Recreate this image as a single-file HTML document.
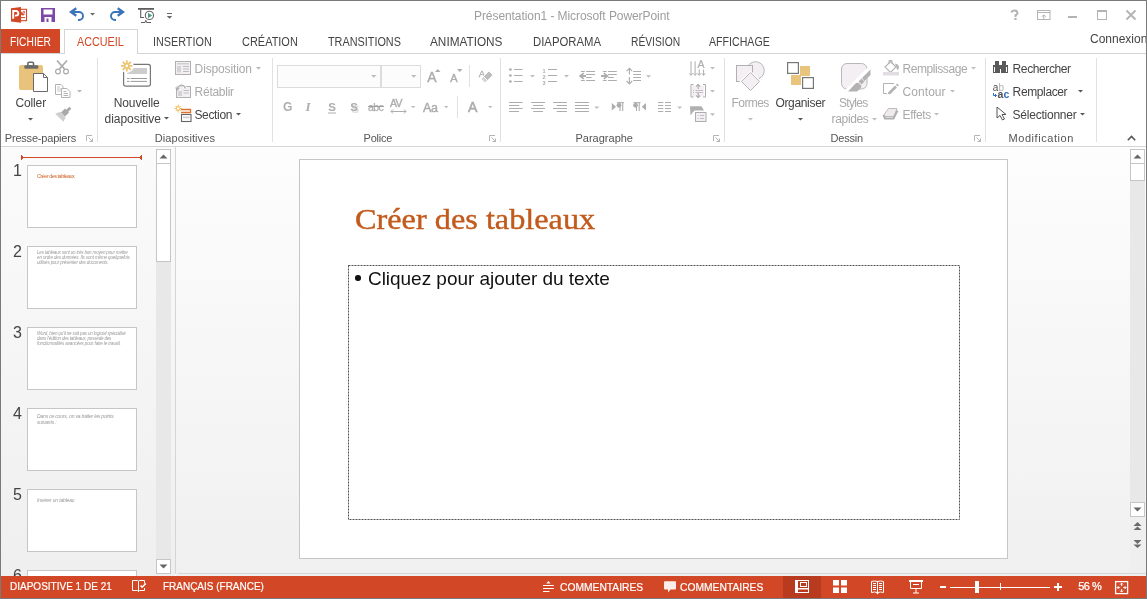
<!DOCTYPE html><html><head><meta charset="utf-8"><style>
html,body{margin:0;padding:0;}
body{width:1147px;height:599px;position:relative;overflow:hidden;background:#fff;will-change:transform;font-family:"Liberation Sans",sans-serif;}
.t{position:absolute;white-space:nowrap;}
.r{position:absolute;}
.s{position:absolute;overflow:visible;}
</style></head><body>
<div class="r" style="left:0px;top:0px;width:1147px;height:599px;background:#ffffff;"></div>
<svg class="s" style="left:0;top:0" width="1147" height="599" viewBox="0 0 1147 599"><rect x="20.5" y="9.3" width="6" height="11.4" fill="#fff" stroke="#d24726" stroke-width="1.1"/>
<path d="M11 8.2L21 7V22.8L11 21.5Z" fill="#d24726"/>
<path d="M13.2 18.8V11H16A2.3 2.3 0 0 1 16 15.6H14.9" fill="none" stroke="#fff" stroke-width="1.9"/>
<path d="M22.5 11.5A2 2 0 1 0 24.8 13.5H22.5Z" fill="#d24726"/>
<path d="M23.3 10.8V12.7H25.2A2 2 0 0 0 23.3 10.8Z" fill="#d24726"/>
<path d="M21 17.6H25" stroke="#d24726" stroke-width="1"/></svg>
<svg class="s" style="left:41px;top:8px;" width="14" height="14" viewBox="0 0 14 14"><path d="M0.5 0.5H13.5V13.5H0.5Z" fill="none" stroke="#7e48a8" stroke-width="1"/>
<rect x="0" y="0" width="14" height="14" fill="#7e48a8"/>
<rect x="2.5" y="1.5" width="9" height="5" fill="#fff"/>
<rect x="3.5" y="9" width="7" height="5" fill="#fff"/>
<rect x="5.5" y="10.5" width="2" height="3.5" fill="#7e48a8"/></svg>
<svg class="s" style="left:0;top:0" width="1147" height="599" viewBox="0 0 1147 599"><path d="M76.3 8.3L71 12L76.3 15.7" fill="none" stroke="#3a73b8" stroke-width="2.3"/>
<path d="M71.5 12H79A4 4 0 0 1 79 20H78" fill="none" stroke="#3a73b8" stroke-width="1.9"/>
<path d="M117.7 8.3L123 12L117.7 15.7" fill="none" stroke="#3a73b8" stroke-width="2.3"/>
<path d="M122.5 12H115A4 4 0 0 0 115 20H116" fill="none" stroke="#3a73b8" stroke-width="1.9"/></svg>
<svg class="s" style="left:90.0px;top:13px;" width="5.0" height="2.5" viewBox="0 0 5.0 2.5"><path d="M0 0H5.0L2.5 2.5Z" fill="#666"/></svg>
<svg class="s" style="left:0;top:0" width="1147" height="599" viewBox="0 0 1147 599"><rect x="138" y="8" width="16" height="1.8" fill="#5f5f5f"/>
<path d="M140.7 9.5V17.5H144" fill="none" stroke="#5f5f5f" stroke-width="1.1"/>
<circle cx="149.4" cy="15.4" r="4.1" fill="#fff" stroke="#666" stroke-width="1.1"/>
<path d="M148 12.8L152.2 15.5L148 18.2Z" fill="#4e9c80"/>
<path d="M141 22.5H145L145.8 20.3L146.6 22.5H151" fill="none" stroke="#5f5f5f" stroke-width="1"/>
<path d="M167 13.5H172" stroke="#666" stroke-width="1"/><path d="M166.8 16H172.2L169.5 18.8Z" fill="#666"/></svg>
<div class="t" style="left:474px;top:10px;font-size:12px;line-height:12px;color:#9d9d9d;font-family:'Liberation Sans', sans-serif;letter-spacing:-0.071px;font-weight:normal;">Présentation1 - Microsoft PowerPoint</div>
<svg class="s" style="left:0;top:0" width="1147" height="599" viewBox="0 0 1147 599"><path d="M1011.5 12.5Q1012 10.5 1014.5 10.5Q1017.5 10.5 1017.5 13Q1017.5 14.5 1015.5 15.3V17" fill="none" stroke="#b3b3b3" stroke-width="2"/>
<rect x="1014.3" y="18" width="2.3" height="2" fill="#b3b3b3"/>
<rect x="1037.5" y="10.5" width="12.5" height="9" fill="none" stroke="#b3b3b3"/><path d="M1037.5 12.5H1050" stroke="#b3b3b3"/>
<path d="M1043.75 19V15M1041.8 16.8L1043.75 14.8L1045.7 16.8" fill="none" stroke="#b3b3b3"/>
<rect x="1068" y="16" width="9" height="2" fill="#b3b3b3"/>
<rect x="1097.5" y="10.5" width="9" height="9" fill="none" stroke="#b3b3b3"/><rect x="1097" y="10" width="10" height="2" fill="#b3b3b3"/>
<path d="M1126.5 10.5L1135.5 19.5M1135.5 10.5L1126.5 19.5" stroke="#b3b3b3" stroke-width="1.8"/></svg>
<div class="r" style="left:1px;top:29px;width:59px;height:25px;background:#d24726;"></div>
<div class="t" style="left:10px;top:36px;font-size:12px;line-height:12px;color:#ffffff;font-family:'Liberation Sans', sans-serif;letter-spacing:0.000px;font-weight:normal;transform:scaleX(0.8542);transform-origin:0px 0;">FICHIER</div>
<div class="r" style="left:64px;top:29px;width:74px;height:25px;border:1px solid #d5d5d5;box-sizing:border-box;border-bottom:none;background:#fff;"></div>
<div class="t" style="left:77px;top:36px;font-size:12px;line-height:12px;color:#d24726;font-family:'Liberation Sans', sans-serif;letter-spacing:0.000px;font-weight:normal;transform:scaleX(0.8981);transform-origin:0px 0;">ACCUEIL</div>
<div class="r" style="left:1px;top:53px;width:63px;height:1px;background:#d5d5d5;"></div>
<div class="r" style="left:137px;top:53px;width:1009px;height:1px;background:#d5d5d5;"></div>
<div class="t" style="left:153px;top:36px;font-size:12px;line-height:12px;color:#444444;font-family:'Liberation Sans', sans-serif;letter-spacing:0.000px;font-weight:normal;transform:scaleX(0.9015);transform-origin:0px 0;">INSERTION</div>
<div class="t" style="left:241.7px;top:36px;font-size:12px;line-height:12px;color:#444444;font-family:'Liberation Sans', sans-serif;letter-spacing:0.000px;font-weight:normal;transform:scaleX(0.9131);transform-origin:0px 0;">CRÉATION</div>
<div class="t" style="left:327.5px;top:36px;font-size:12px;line-height:12px;color:#444444;font-family:'Liberation Sans', sans-serif;letter-spacing:0.000px;font-weight:normal;transform:scaleX(0.9037);transform-origin:0px 0;">TRANSITIONS</div>
<div class="t" style="left:430px;top:36px;font-size:12px;line-height:12px;color:#444444;font-family:'Liberation Sans', sans-serif;letter-spacing:0.000px;font-weight:normal;transform:scaleX(0.9824);transform-origin:0px 0;">ANIMATIONS</div>
<div class="t" style="left:532.5px;top:36px;font-size:12px;line-height:12px;color:#444444;font-family:'Liberation Sans', sans-serif;letter-spacing:0.000px;font-weight:normal;transform:scaleX(0.9444);transform-origin:0px 0;">DIAPORAMA</div>
<div class="t" style="left:630.5px;top:36px;font-size:12px;line-height:12px;color:#444444;font-family:'Liberation Sans', sans-serif;letter-spacing:0.000px;font-weight:normal;transform:scaleX(0.8561);transform-origin:0px 0;">RÉVISION</div>
<div class="t" style="left:709.3px;top:36px;font-size:12px;line-height:12px;color:#444444;font-family:'Liberation Sans', sans-serif;letter-spacing:0.000px;font-weight:normal;transform:scaleX(0.8841);transform-origin:0px 0;">AFFICHAGE</div>
<div class="t" style="left:1090px;top:33px;font-size:12px;line-height:12px;color:#444444;font-family:'Liberation Sans', sans-serif;letter-spacing:0.000px;font-weight:normal;">Connexion</div>
<div class="r" style="left:1px;top:146px;width:1145px;height:1px;background:#d5d5d5;"></div>
<div class="r" style="left:97px;top:58px;width:1px;height:84px;background:#e1e1e1;"></div>
<div class="r" style="left:272px;top:58px;width:1px;height:84px;background:#e1e1e1;"></div>
<div class="r" style="left:500px;top:58px;width:1px;height:84px;background:#e1e1e1;"></div>
<div class="r" style="left:724px;top:58px;width:1px;height:84px;background:#e1e1e1;"></div>
<div class="r" style="left:985px;top:58px;width:1px;height:84px;background:#e1e1e1;"></div>
<div class="r" style="left:1096px;top:58px;width:1px;height:84px;background:#e1e1e1;"></div>
<div class="t" style="left:4.8px;top:133px;font-size:11px;line-height:11px;color:#555;font-family:'Liberation Sans', sans-serif;letter-spacing:-0.200px;font-weight:normal;">Presse-papiers</div>
<div class="t" style="left:154.7px;top:133px;font-size:11px;line-height:11px;color:#555;font-family:'Liberation Sans', sans-serif;letter-spacing:0.082px;font-weight:normal;">Diapositives</div>
<div class="t" style="left:363.6px;top:133px;font-size:11px;line-height:11px;color:#555;font-family:'Liberation Sans', sans-serif;letter-spacing:-0.220px;font-weight:normal;">Police</div>
<div class="t" style="left:575.5px;top:133px;font-size:11px;line-height:11px;color:#555;font-family:'Liberation Sans', sans-serif;letter-spacing:0.000px;font-weight:normal;">Paragraphe</div>
<div class="t" style="left:830.6px;top:133px;font-size:11px;line-height:11px;color:#555;font-family:'Liberation Sans', sans-serif;letter-spacing:-0.200px;font-weight:normal;">Dessin</div>
<div class="t" style="left:1008.5px;top:133px;font-size:11px;line-height:11px;color:#555;font-family:'Liberation Sans', sans-serif;letter-spacing:0.555px;font-weight:normal;">Modification</div>
<svg class="s" style="left:86px;top:135px;" width="7" height="7" viewBox="0 0 7 7"><path d="M0.5 6V0.5H6" fill="none" stroke="#b5b5b5"/><path d="M2.5 2.5L6.5 6.5M6.5 3.5V6.5H3.5" fill="none" stroke="#b5b5b5"/></svg>
<svg class="s" style="left:489px;top:135px;" width="7" height="7" viewBox="0 0 7 7"><path d="M0.5 6V0.5H6" fill="none" stroke="#b5b5b5"/><path d="M2.5 2.5L6.5 6.5M6.5 3.5V6.5H3.5" fill="none" stroke="#b5b5b5"/></svg>
<svg class="s" style="left:713px;top:135px;" width="7" height="7" viewBox="0 0 7 7"><path d="M0.5 6V0.5H6" fill="none" stroke="#b5b5b5"/><path d="M2.5 2.5L6.5 6.5M6.5 3.5V6.5H3.5" fill="none" stroke="#b5b5b5"/></svg>
<svg class="s" style="left:974px;top:135px;" width="7" height="7" viewBox="0 0 7 7"><path d="M0.5 6V0.5H6" fill="none" stroke="#b5b5b5"/><path d="M2.5 2.5L6.5 6.5M6.5 3.5V6.5H3.5" fill="none" stroke="#b5b5b5"/></svg>
<svg class="s" style="left:1127px;top:135px;" width="9" height="6" viewBox="0 0 9 6"><path d="M0.8 5.2L4.5 1.5L8.2 5.2" fill="none" stroke="#555" stroke-width="1.6"/></svg>
<svg class="s" style="left:18px;top:61px;" width="30" height="31" viewBox="0 0 30 31"><rect x="1" y="4" width="24" height="25" rx="2" fill="#e9c27b"/>
<rect x="6.3" y="4.3" width="14" height="3.5" rx="1.2" fill="#6a6a6a"/>
<rect x="9.8" y="1.2" width="5.8" height="3.8" rx="1.5" fill="none" stroke="#6a6a6a" stroke-width="1.6"/>
<path d="M15.5 12.5H25.5L29.5 16.5V30.5H15.5Z" fill="#fff" stroke="#6a6a6a" stroke-width="1"/>
<path d="M25.5 12.5V16.5H29.5" fill="none" stroke="#6a6a6a" stroke-width="1"/></svg>
<div class="t" style="left:15.5px;top:97px;font-size:12px;line-height:12px;color:#444444;font-family:'Liberation Sans', sans-serif;letter-spacing:-0.140px;font-weight:normal;">Coller</div>
<svg class="s" style="left:28.0px;top:117.5px;" width="5.0" height="2.5" viewBox="0 0 5.0 2.5"><path d="M0 0H5.0L2.5 2.5Z" fill="#555"/></svg>
<svg class="s" style="left:0;top:0" width="1147" height="599" viewBox="0 0 1147 599"><path d="M57 60.5L64.5 69M67 60.5L59.5 69" stroke="#ababab" stroke-width="1.7"/>
<circle cx="58" cy="71.5" r="2.4" fill="#fff" stroke="#ababab" stroke-width="1.2"/>
<circle cx="66" cy="71.5" r="2.4" fill="#fff" stroke="#ababab" stroke-width="1.2"/></svg>
<svg class="s" style="left:55px;top:84px;" width="16" height="14" viewBox="0 0 16 14"><path d="M0.5 0.5H6L8 2.5V10.5H0.5Z" fill="#fff" stroke="#b3b3b3"/>
<path d="M2 3H5M2 5H6M2 7H6" stroke="#c8c8c8"/>
<path d="M6.5 4.5H12L15 7.5V13.5H6.5Z" fill="#fff" stroke="#b3b3b3"/>
<path d="M8.5 7.5H11.5M8.5 9.5H13M8.5 11.5H13" stroke="#b3b3b3"/></svg>
<svg class="s" style="left:77.0px;top:90px;" width="5.0" height="2.5" viewBox="0 0 5.0 2.5"><path d="M0 0H5.0L2.5 2.5Z" fill="#b5b5b5"/></svg>
<svg class="s" style="left:0;top:0" width="1147" height="599" viewBox="0 0 1147 599"><path d="M66.3 111.7L70.3 107.7" stroke="#a9a9a9" stroke-width="2.8"/>
<path d="M61 112.5L65 108.5L69 112.5L65 116.5Z" fill="#a9a9a9"/>
<path d="M60.2 111.8L65.7 117.3L63.5 121.8L55.2 113.8Z" fill="#cfcfcf"/></svg>
<svg class="s" style="left:0;top:0" width="1147" height="599" viewBox="0 0 1147 599"><rect x="123.6" y="64.4" width="26.8" height="21.8" rx="2.2" fill="#fff" stroke="#777" stroke-width="1.2"/>
<rect x="127" y="68" width="20" height="6" fill="#cdcdcd"/>
<path d="M127 78.5H129.5M130.5 78.5H147M127 81.4H129.5M130.5 81.4H147" stroke="#9a9a9a" stroke-width="1"/>
<circle cx="126.8" cy="65.9" r="7" fill="#fff"/>
<path d="M126.8 60.3V71.5M121.2 65.9H132.4M122.8 61.9L130.8 69.9M130.8 61.9L122.8 69.9" stroke="#ecc26a" stroke-width="1.7"/>
<circle cx="126.8" cy="65.9" r="2.6" fill="#ecc26a"/><circle cx="126.8" cy="65.9" r="1.4" fill="#fff"/></svg>
<div class="t" style="left:113.7px;top:97px;font-size:12px;line-height:12px;color:#444444;font-family:'Liberation Sans', sans-serif;letter-spacing:-0.100px;font-weight:normal;">Nouvelle</div>
<div class="t" style="left:104.6px;top:113px;font-size:12px;line-height:12px;color:#444444;font-family:'Liberation Sans', sans-serif;letter-spacing:-0.040px;font-weight:normal;">diapositive</div>
<svg class="s" style="left:164.0px;top:117.3px;" width="5.0" height="2.5" viewBox="0 0 5.0 2.5"><path d="M0 0H5.0L2.5 2.5Z" fill="#555"/></svg>
<svg class="s" style="left:0;top:0" width="1147" height="599" viewBox="0 0 1147 599"><rect x="175.5" y="61.5" width="15" height="13" fill="#f3eff3" stroke="#b0b0b0"/>
<rect x="177" y="63" width="12" height="1.5" fill="#cfcfcf"/>
<rect x="177" y="66" width="4" height="6.5" fill="#d3d3d3"/>
<path d="M183 66.5H189M183 69H189M183 71.5H189" stroke="#bdbdbd"/></svg>
<div class="t" style="left:194.6px;top:63px;font-size:12px;line-height:12px;color:#a9a9a9;font-family:'Liberation Sans', sans-serif;letter-spacing:-0.130px;font-weight:normal;">Disposition</div>
<svg class="s" style="left:256.0px;top:66.5px;" width="5.0" height="2.5" viewBox="0 0 5.0 2.5"><path d="M0 0H5.0L2.5 2.5Z" fill="#b5b5b5"/></svg>
<svg class="s" style="left:0;top:0" width="1147" height="599" viewBox="0 0 1147 599"><rect x="176.5" y="86.5" width="14" height="11" fill="#f3eff3" stroke="#b0b0b0"/>
<rect x="178" y="91" width="4" height="5" fill="#d3d3d3"/>
<path d="M183.5 90.5H189M183.5 93H189" stroke="#bdbdbd"/>
<path d="M185.5 88.5Q184 84 180 85Q177.5 86 177.5 89" fill="none" stroke="#fff" stroke-width="3"/>
<path d="M185.5 88.5Q184 84.5 180.5 85.3Q178 86 177.3 88.5" fill="none" stroke="#b0b0b0" stroke-width="1.3"/>
<path d="M175 87.5L177.3 91L179.8 87.8Z" fill="#b0b0b0"/></svg>
<div class="t" style="left:194.6px;top:86px;font-size:12px;line-height:12px;color:#a9a9a9;font-family:'Liberation Sans', sans-serif;letter-spacing:-0.271px;font-weight:normal;">Rétablir</div>
<svg class="s" style="left:0;top:0" width="1147" height="599" viewBox="0 0 1147 599"><path d="M181 109.5H190.5V112.5H181" fill="none" stroke="#e0702b" stroke-width="1.3"/>
<rect x="181.5" y="114.5" width="9.5" height="7" fill="#fff" stroke="#666" stroke-width="1.1"/>
<rect x="183" y="116.5" width="6.5" height="1.8" fill="#cfcfcf"/>
<path d="M178.2 104.5V112.5M174.5 108.5H182M175.6 105.9L180.8 111.1M180.8 105.9L175.6 111.1" stroke="#f0b54a" stroke-width="0.9"/>
<circle cx="178.2" cy="108.5" r="1.8" fill="#fff" stroke="#f0b54a" stroke-width="0.9"/></svg>
<div class="t" style="left:194.4px;top:109px;font-size:12px;line-height:12px;color:#444444;font-family:'Liberation Sans', sans-serif;letter-spacing:-0.333px;font-weight:normal;">Section</div>
<svg class="s" style="left:236.3px;top:113px;" width="5.0" height="2.5" viewBox="0 0 5.0 2.5"><path d="M0 0H5.0L2.5 2.5Z" fill="#555"/></svg>
<div class="r" style="left:277px;top:65px;width:104px;height:23px;border:1px solid #dcdcdc;box-sizing:border-box;background:#fcfcfc;"></div>
<div class="r" style="left:381px;top:65px;width:40px;height:23px;border:1px solid #dcdcdc;box-sizing:border-box;background:#fcfcfc;"></div>
<svg class="s" style="left:370.7px;top:74.8px;" width="5.6" height="2.8" viewBox="0 0 5.6 2.8"><path d="M0 0H5.6L2.8 2.8Z" fill="#bdbdbd"/></svg>
<svg class="s" style="left:410.7px;top:74.8px;" width="5.6" height="2.8" viewBox="0 0 5.6 2.8"><path d="M0 0H5.6L2.8 2.8Z" fill="#bdbdbd"/></svg>
<svg class="s" style="left:0;top:0" width="1147" height="599" viewBox="0 0 1147 599"><text x="427.3" y="81.6" font-family="Liberation Sans" font-size="14" fill="#adadad" stroke="#adadad" stroke-width="0.45">A</text>
<path d="M435 72H440.5L437.75 69Z" fill="#adadad"/>
<text x="450.2" y="81.6" font-family="Liberation Sans" font-size="11" fill="#adadad" stroke="#adadad" stroke-width="0.4">A</text>
<path d="M457 69H462.5L459.75 72Z" fill="#adadad"/></svg>
<div class="r" style="left:469px;top:65px;width:1px;height:22px;background:#e1e1e1;"></div>
<svg class="s" style="left:0;top:0" width="1147" height="599" viewBox="0 0 1147 599"><text x="478.8" y="77" font-family="Liberation Sans" font-size="9.5" fill="#b0b0b0" stroke="#b0b0b0" stroke-width="0.3">A</text>
<path d="M483.5 76.5L489 71L493 75L487.5 80.5Z" fill="#bdbdbd" stroke="#fff" stroke-width="0.8"/>
<path d="M481 79L483.5 76.5L487.5 80.5L485 83Z" fill="#d5d5d5" stroke="#fff" stroke-width="0.8"/></svg>
<svg class="s" style="left:0;top:0" width="1147" height="599" viewBox="0 0 1147 599"><text x="283" y="111" font-family="Liberation Sans" font-weight="bold" font-size="12" fill="#adadad">G</text>
<text x="305.5" y="111" font-family="Liberation Serif" font-weight="bold" font-style="italic" font-size="13" fill="#adadad">I</text>
<text x="328.3" y="111" font-family="Liberation Sans" font-weight="bold" font-size="11.5" fill="#adadad">S</text><rect x="328" y="112.5" width="8" height="1" fill="#adadad"/>
<text x="351.5" y="112.5" font-family="Liberation Sans" font-weight="bold" font-size="11.5" fill="#e2e2e2">S</text>
<text x="350.3" y="111" font-family="Liberation Sans" font-weight="bold" font-size="11.5" fill="#adadad">S</text>
<text x="368" y="110.5" font-family="Liberation Sans" font-size="10.5" fill="#adadad" stroke="#adadad" stroke-width="0.25" letter-spacing="-0.6">abc</text><rect x="368" y="106" width="16" height="1" fill="#a0a0a0"/>
<text x="390" y="107.3" font-family="Liberation Sans" font-size="10.5" fill="#adadad" stroke="#adadad" stroke-width="0.35" letter-spacing="-0.6">AV</text>
<path d="M391 111.5H406M393 109.5L391 111.5L393 113.5M404 109.5L406 111.5L404 113.5" fill="none" stroke="#adadad"/></svg>
<svg class="s" style="left:410.8px;top:105.5px;" width="4.4" height="2.2" viewBox="0 0 4.4 2.2"><path d="M0 0H4.4L2.2 2.2Z" fill="#bdbdbd"/></svg>
<svg class="s" style="left:423px;top:101px;" width="16" height="12" viewBox="0 0 16 12"><text x="0" y="10.5" font-family="Liberation Sans" font-size="12.5" fill="#adadad" stroke="#adadad" stroke-width="0.45" letter-spacing="-0.3">Aa</text></svg>
<svg class="s" style="left:443.8px;top:105.5px;" width="4.4" height="2.2" viewBox="0 0 4.4 2.2"><path d="M0 0H4.4L2.2 2.2Z" fill="#bdbdbd"/></svg>
<div class="r" style="left:457px;top:96px;width:1px;height:22px;background:#e1e1e1;"></div>
<svg class="s" style="left:468px;top:101px;" width="11" height="12" viewBox="0 0 11 12"><text x="0" y="11" font-family="Liberation Sans" font-size="14" fill="#adadad" stroke="#adadad" stroke-width="0.6">A</text></svg>
<svg class="s" style="left:487.5px;top:105.5px;" width="4.4" height="2.2" viewBox="0 0 4.4 2.2"><path d="M0 0H4.4L2.2 2.2Z" fill="#bdbdbd"/></svg>
<svg class="s" style="left:0;top:0" width="1147" height="599" viewBox="0 0 1147 599"><circle cx="510.4" cy="69.5" r="1.35" fill="#adadad"/><path d="M514 69.5H522.5" stroke="#adadad"/><circle cx="510.4" cy="75.5" r="1.35" fill="#adadad"/><path d="M514 75.5H522.5" stroke="#adadad"/><circle cx="510.4" cy="81.5" r="1.35" fill="#adadad"/><path d="M514 81.5H522.5" stroke="#adadad"/><path d="M530 75H535L532.5 77.6Z" fill="#bdbdbd"/><path d="M548 69.5H557" stroke="#adadad"/><path d="M548 75.5H557" stroke="#adadad"/><path d="M548 81.5H557" stroke="#adadad"/><text x="542.6" y="72.6" font-family="Liberation Sans" font-weight="bold" font-size="5.5" fill="#adadad">1</text><text x="542.6" y="78.6" font-family="Liberation Sans" font-weight="bold" font-size="5.5" fill="#adadad">2</text><text x="542.6" y="84.6" font-family="Liberation Sans" font-weight="bold" font-size="5.5" fill="#adadad">3</text><path d="M564 75H569L566.5 77.6Z" fill="#bdbdbd"/><path d="M581 71.5H584.8M586.2 71.5H595M586.2 74.5H595M586.2 77.5H591.7M581 80.5H584.8M586.2 80.5H595" stroke="#adadad"/><path d="M583.8 73.2L580 76L583.8 78.8" fill="none" stroke="#adadad" stroke-width="1.6"/><path d="M580 76H586" stroke="#adadad" stroke-width="2"/><path d="M602.9 71.5H606.7M608.1 71.5H616.8M608.1 74.5H616.8M608.1 77.5H613.7M602.9 80.5H606.7M608.1 80.5H616.8" stroke="#adadad"/><path d="M603.8 73.2L607.6 76L603.8 78.8" fill="none" stroke="#adadad" stroke-width="1.6"/><path d="M601 76H607" stroke="#adadad" stroke-width="2"/><path d="M629.4 68.5V74.6M629.4 77V83.6" stroke="#adadad" stroke-width="1.1"/><path d="M626.6 71.2L629.4 68.3L632.2 71.2M626.6 81L629.4 83.9L632.2 81" fill="none" stroke="#adadad" stroke-width="1.1"/><path d="M633.2 71.5H641M633.2 74.5H641M633.2 77.5H641M633.2 80.5H641" stroke="#adadad"/><path d="M646 75.2H651L648.5 77.8Z" fill="#bdbdbd"/><path d="M691 61.3V75M695.1 61.3V75M699.2 69.5V75M703.6 69.5V75" stroke="#adadad"/><path d="M689.3 73.3L691 75.5L692.7 73.3" fill="none" stroke="#adadad" stroke-width="0.9"/><path d="M693.4 73.3L695.1 75.5L696.8000000000001 73.3" fill="none" stroke="#adadad" stroke-width="0.9"/><path d="M697.5 73.3L699.2 75.5L700.9000000000001 73.3" fill="none" stroke="#adadad" stroke-width="0.9"/><path d="M701.9 73.3L703.6 75.5L705.3000000000001 73.3" fill="none" stroke="#adadad" stroke-width="0.9"/><text x="697.6" y="67.8" font-family="Liberation Sans" font-size="10.5" fill="#adadad" stroke="#adadad" stroke-width="0.2">A</text><path d="M710 67H715L712.5 69.6Z" fill="#bdbdbd"/><rect x="692" y="85.5" width="12" height="11" fill="#f3eff3"/><path d="M693.5 84.5H691V97H693.5M703 84.5H705.5V97H703" fill="none" stroke="#adadad"/><path d="M693 90.5H694M695.5 90.5H703M693 92.5H694M695.5 92.5H703" stroke="#c5bfc5"/><path d="M698.2 84.5V89M698.2 93V97.5" stroke="#adadad" stroke-width="1.1"/><path d="M696.2 86.5L698.2 84.5L700.2 86.5M696.2 95.5L698.2 97.5L700.2 95.5" fill="none" stroke="#adadad" stroke-width="1.1"/><path d="M710 90H715L712.5 92.6Z" fill="#bdbdbd"/><path d="M690 106.3H701.5L704 110.4H694.5L693 112L690.5 115.6Z" fill="#b0b0b0"/><rect x="695.5" y="112.5" width="10.5" height="9" fill="#f3eff3" stroke="#adadad"/><path d="M697.5 115.5H698.5M700 115.5H704M697.5 118.5H698.5M700 118.5H704" stroke="#c0bac0"/><path d="M710 113.3H715L712.5 115.89999999999999Z" fill="#bdbdbd"/><path d="M509 102.5H522.6" stroke="#adadad"/><path d="M531.2 102.5H545" stroke="#adadad"/><path d="M553 102.5H567" stroke="#adadad"/><path d="M575 102.5H589" stroke="#adadad"/><path d="M658 102.5H663.2" stroke="#adadad"/><path d="M665 102.5H671" stroke="#adadad"/><path d="M509 105.5H519" stroke="#adadad"/><path d="M533.2 105.5H543" stroke="#adadad"/><path d="M556.7 105.5H567" stroke="#adadad"/><path d="M575 105.5H589" stroke="#adadad"/><path d="M658 105.5H663.2" stroke="#adadad"/><path d="M665 105.5H671" stroke="#adadad"/><path d="M509 108.5H522.6" stroke="#adadad"/><path d="M531.2 108.5H545" stroke="#adadad"/><path d="M553 108.5H567" stroke="#adadad"/><path d="M575 108.5H589" stroke="#adadad"/><path d="M658 108.5H663.2" stroke="#adadad"/><path d="M665 108.5H671" stroke="#adadad"/><path d="M509 111.5H519" stroke="#adadad"/><path d="M533.2 111.5H543" stroke="#adadad"/><path d="M556.7 111.5H567" stroke="#adadad"/><path d="M575 111.5H589" stroke="#adadad"/><path d="M658 111.5H663.2" stroke="#adadad"/><path d="M665 111.5H671" stroke="#adadad"/><path d="M594.3 106.5H599.3L596.8 109.1Z" fill="#bdbdbd"/><path d="M677.2 106.5H682.2L679.7 109.1Z" fill="#bdbdbd"/><path d="M611.8 103L616 106.7L611.8 110.4Z" fill="#adadad"/><path d="M620 103V111M622.7 103V111" stroke="#adadad" stroke-width="1.1"/><path d="M617 102.6H624" stroke="#adadad"/><circle cx="619" cy="105.3" r="2.4" fill="#adadad"/><path d="M646 103L641.8 106.7L646 110.4Z" fill="#adadad"/><path d="M636.5 103V111M639.2 103V111" stroke="#adadad" stroke-width="1.1"/><path d="M633.6 102.6H640.5" stroke="#adadad"/><circle cx="635.5" cy="105.3" r="2.4" fill="#adadad"/></svg>
<svg class="s" style="left:0;top:0" width="1147" height="599" viewBox="0 0 1147 599"><circle cx="755.5" cy="70.5" r="8.8" fill="#f3eff3" stroke="#b8b8b8"/>
<rect x="736.5" y="65.5" width="16" height="16" fill="#f3eff3" stroke="#b0b0b0"/>
<path d="M750.5 70.5L761.5 81.5L750.5 92.5L739.5 81.5Z" fill="#fff"/>
<path d="M750.5 72.5L759.5 81.5L750.5 90.5L741.5 81.5Z" fill="#f3eff3" stroke="#b8b8b8"/></svg>
<div class="t" style="left:731.6px;top:97px;font-size:12px;line-height:12px;color:#a9a9a9;font-family:'Liberation Sans', sans-serif;letter-spacing:-0.580px;font-weight:normal;">Formes</div>
<svg class="s" style="left:747.5px;top:117.5px;" width="5.0" height="2.5" viewBox="0 0 5.0 2.5"><path d="M0 0H5.0L2.5 2.5Z" fill="#bdbdbd"/></svg>
<svg class="s" style="left:0;top:0" width="1147" height="599" viewBox="0 0 1147 599"><rect x="800" y="66" width="10" height="10" fill="#e9c47d"/><rect x="791" y="75" width="10" height="10" fill="#e9c47d"/>
<rect x="787.6" y="62.6" width="10.8" height="10.8" fill="#fff" stroke="#777" stroke-width="1.2"/>
<rect x="802.6" y="77.6" width="10.8" height="10.8" fill="#fff" stroke="#777" stroke-width="1.2"/></svg>
<div class="t" style="left:775.4px;top:97px;font-size:12px;line-height:12px;color:#444444;font-family:'Liberation Sans', sans-serif;letter-spacing:-0.325px;font-weight:normal;">Organiser</div>
<svg class="s" style="left:798.0px;top:117.5px;" width="5.0" height="2.5" viewBox="0 0 5.0 2.5"><path d="M0 0H5.0L2.5 2.5Z" fill="#555"/></svg>
<svg class="s" style="left:0;top:0" width="1147" height="599" viewBox="0 0 1147 599"><rect x="841.5" y="63.5" width="25.5" height="25.5" rx="5.5" fill="#f3eff3" stroke="#b8b8b8"/>
<path d="M846 94L872 68" stroke="#fff" stroke-width="7"/>
<path d="M862 78L870.5 69.5V75L864.5 81Z" fill="#b3b3b3"/>
<path d="M858.5 81.5L861.5 78.5L864.5 81.5L861.5 84.5Z" fill="#b3b3b3"/>
<path d="M848 91.5L855 84A3 3 0 0 1 860 89L857 91.5Z" fill="#b3b3b3"/></svg>
<div class="t" style="left:839px;top:97px;font-size:12px;line-height:12px;color:#a9a9a9;font-family:'Liberation Sans', sans-serif;letter-spacing:-0.700px;font-weight:normal;">Styles</div>
<div class="t" style="left:831.6px;top:113px;font-size:12px;line-height:12px;color:#a9a9a9;font-family:'Liberation Sans', sans-serif;letter-spacing:-0.350px;font-weight:normal;">rapides</div>
<svg class="s" style="left:871.5px;top:117.5px;" width="5.0" height="2.5" viewBox="0 0 5.0 2.5"><path d="M0 0H5.0L2.5 2.5Z" fill="#bdbdbd"/></svg>
<svg class="s" style="left:0;top:0" width="1147" height="599" viewBox="0 0 1147 599"><path d="M890.5 61.5L896 67L890.5 72.5L885 67Z" fill="#fff" stroke="#b3b3b3" stroke-width="1.1"/>
<path d="M889 64V60.5H892V64" fill="none" stroke="#b3b3b3"/>
<path d="M895 63.5Q899 64 899 68L897.5 70.5Z" fill="#b3b3b3"/>
<rect x="883" y="72" width="16" height="3.5" fill="#e3dde3"/></svg>
<div class="t" style="left:902.6px;top:63px;font-size:12px;line-height:12px;color:#a9a9a9;font-family:'Liberation Sans', sans-serif;letter-spacing:-0.440px;font-weight:normal;">Remplissage</div>
<svg class="s" style="left:971.0px;top:67px;" width="5.0" height="2.5" viewBox="0 0 5.0 2.5"><path d="M0 0H5.0L2.5 2.5Z" fill="#bdbdbd"/></svg>
<svg class="s" style="left:0;top:0" width="1147" height="599" viewBox="0 0 1147 599"><path d="M894 83.5H883.5V93.5H887" fill="none" stroke="#b3b3b3"/>
<path d="M889 93.5L896 86.5" stroke="#b3b3b3" stroke-width="2.6"/><path d="M896.8 85.7L898 84.5" stroke="#b3b3b3" stroke-width="2.6"/>
<path d="M888.2 94.2L889.5 92" stroke="#b3b3b3" stroke-width="1"/></svg>
<div class="t" style="left:902.6px;top:86px;font-size:12px;line-height:12px;color:#a9a9a9;font-family:'Liberation Sans', sans-serif;letter-spacing:0.050px;font-weight:normal;">Contour</div>
<svg class="s" style="left:949.5px;top:90px;" width="5.0" height="2.5" viewBox="0 0 5.0 2.5"><path d="M0 0H5.0L2.5 2.5Z" fill="#bdbdbd"/></svg>
<svg class="s" style="left:0;top:0" width="1147" height="599" viewBox="0 0 1147 599"><path d="M884 114.5L888.5 108.5H897L894 116.5H885.5Z" fill="#eeeaee" stroke="#bdbdbd" stroke-width="1"/>
<path d="M883.5 115L885 118.5H893.5L897.5 110.5" fill="none" stroke="#b0b0b0" stroke-width="2"/></svg>
<div class="t" style="left:902.6px;top:109px;font-size:12px;line-height:12px;color:#a9a9a9;font-family:'Liberation Sans', sans-serif;letter-spacing:-0.340px;font-weight:normal;">Effets</div>
<svg class="s" style="left:934.0px;top:113px;" width="5.0" height="2.5" viewBox="0 0 5.0 2.5"><path d="M0 0H5.0L2.5 2.5Z" fill="#bdbdbd"/></svg>
<svg class="s" style="left:0;top:0" width="1147" height="599" viewBox="0 0 1147 599"><path d="M995 61H999V65H1000V73H993V65H995Z" fill="#5a5a5a"/>
<path d="M1002 61H1006V65H1008V73H1001V65H1002Z" fill="#5a5a5a"/>
<rect x="999" y="65" width="3" height="4" fill="#5a5a5a"/>
<path d="M994.5 67V72M1006.5 67V72" stroke="#fff" stroke-width="1"/></svg>
<div class="t" style="left:1012.6px;top:63px;font-size:12px;line-height:12px;color:#444444;font-family:'Liberation Sans', sans-serif;letter-spacing:-0.400px;font-weight:normal;">Rechercher</div>
<svg class="s" style="left:0;top:0" width="1147" height="599" viewBox="0 0 1147 599"><text x="992.8" y="90.8" font-family="Liberation Sans" font-size="10" fill="#505050">a</text>
<text x="998.6" y="90.8" font-family="Liberation Sans" font-size="10" fill="#b0b0b0">b</text>
<text x="997.6" y="97.9" font-family="Liberation Sans" font-size="10.5" fill="#505050" font-weight="bold">a</text>
<text x="1003.4" y="97.9" font-family="Liberation Sans" font-size="10.5" fill="#2f6fbd" font-weight="bold">c</text>
<path d="M993.5 93V95.5H996.5M995 94L996.5 95.5L995 97" fill="none" stroke="#2f6fbd" stroke-width="1"/></svg>
<div class="t" style="left:1012.6px;top:86px;font-size:12px;line-height:12px;color:#444444;font-family:'Liberation Sans', sans-serif;letter-spacing:-0.375px;font-weight:normal;">Remplacer</div>
<svg class="s" style="left:1078.0px;top:90.3px;" width="5.0" height="2.5" viewBox="0 0 5.0 2.5"><path d="M0 0H5.0L2.5 2.5Z" fill="#555"/></svg>
<svg class="s" style="left:996px;top:106px;" width="11" height="15" viewBox="0 0 11 15"><path d="M1 1V12L4 9.5L6.5 14L8.5 13L6 8.5H10Z" fill="#fff" stroke="#555" stroke-width="1"/></svg>
<div class="t" style="left:1012.6px;top:109px;font-size:12px;line-height:12px;color:#444444;font-family:'Liberation Sans', sans-serif;letter-spacing:-0.236px;font-weight:normal;">Sélectionner</div>
<svg class="s" style="left:1080.0px;top:113px;" width="5.0" height="2.5" viewBox="0 0 5.0 2.5"><path d="M0 0H5.0L2.5 2.5Z" fill="#555"/></svg>
<div class="r" style="left:1px;top:147px;width:174px;height:429px;background:linear-gradient(#fbfbfb,#efefef);"></div>
<div class="r" style="left:21px;top:157px;width:121px;height:1px;background:#d24726;"></div>
<div class="r" style="left:21px;top:155px;width:1px;height:5px;background:#d24726;"></div>
<div class="r" style="left:22px;top:156px;width:1px;height:3px;background:#d24726;"></div>
<div class="r" style="left:141px;top:155px;width:1px;height:5px;background:#d24726;"></div>
<div class="r" style="left:140px;top:156px;width:1px;height:3px;background:#d24726;"></div>
<div class="r" style="left:27px;top:165px;width:110px;height:63px;border:1px solid #c6c6c6;box-sizing:border-box;background:#fff;"></div>
<div class="t" style="left:13px;top:163px;font-size:16px;line-height:16px;color:#444;font-family:'Liberation Sans', sans-serif;letter-spacing:0.000px;font-weight:normal;">1</div>
<div class="r" style="left:27px;top:246px;width:110px;height:63px;border:1px solid #c6c6c6;box-sizing:border-box;background:#fff;"></div>
<div class="t" style="left:13px;top:244px;font-size:16px;line-height:16px;color:#444;font-family:'Liberation Sans', sans-serif;letter-spacing:0.000px;font-weight:normal;">2</div>
<div class="r" style="left:27px;top:327px;width:110px;height:63px;border:1px solid #c6c6c6;box-sizing:border-box;background:#fff;"></div>
<div class="t" style="left:13px;top:325px;font-size:16px;line-height:16px;color:#444;font-family:'Liberation Sans', sans-serif;letter-spacing:0.000px;font-weight:normal;">3</div>
<div class="r" style="left:27px;top:408px;width:110px;height:63px;border:1px solid #c6c6c6;box-sizing:border-box;background:#fff;"></div>
<div class="t" style="left:13px;top:406px;font-size:16px;line-height:16px;color:#444;font-family:'Liberation Sans', sans-serif;letter-spacing:0.000px;font-weight:normal;">4</div>
<div class="r" style="left:27px;top:489px;width:110px;height:63px;border:1px solid #c6c6c6;box-sizing:border-box;background:#fff;"></div>
<div class="t" style="left:13px;top:487px;font-size:16px;line-height:16px;color:#444;font-family:'Liberation Sans', sans-serif;letter-spacing:0.000px;font-weight:normal;">5</div>
<div class="r" style="left:27px;top:570px;width:110px;height:63px;border:1px solid #c6c6c6;box-sizing:border-box;background:#fff;"></div>
<div class="t" style="left:13px;top:568px;font-size:16px;line-height:16px;color:#444;font-family:'Liberation Sans', sans-serif;letter-spacing:0.000px;font-weight:normal;">6</div>
<div class="t" style="left:37px;top:174.0px;font-size:5.5px;line-height:5.5px;color:#d0662a;letter-spacing:-0.510px;">Créer des tableaux</div>
<div class="t" style="left:37px;top:251.0px;font-size:4.5px;line-height:4.5px;color:#989898;letter-spacing:-0.158px;font-style:italic;">Les tableaux sont un très bon moyen pour mettre</div>
<div class="t" style="left:37px;top:256.0px;font-size:4.5px;line-height:4.5px;color:#989898;letter-spacing:-0.125px;font-style:italic;">en ordre des données. Ils sont même quelquefois</div>
<div class="t" style="left:37px;top:261.0px;font-size:4.5px;line-height:4.5px;color:#989898;letter-spacing:-0.151px;font-style:italic;">utilisés pour présenter des documents.</div>
<div class="t" style="left:37px;top:332.0px;font-size:4.5px;line-height:4.5px;color:#989898;letter-spacing:-0.149px;font-style:italic;">Word, bien qu’il ne soit pas un logiciel spécialisé</div>
<div class="t" style="left:37px;top:337.0px;font-size:4.5px;line-height:4.5px;color:#989898;letter-spacing:-0.173px;font-style:italic;">dans l’édition des tableaux, possède des</div>
<div class="t" style="left:37px;top:342.0px;font-size:4.5px;line-height:4.5px;color:#989898;letter-spacing:-0.109px;font-style:italic;">fonctionnalités avancées pour faire le travail.</div>
<div class="t" style="left:37px;top:414.0px;font-size:5px;line-height:5px;color:#989898;letter-spacing:-0.180px;font-style:italic;">Dans ce cours, on va traiter les points</div>
<div class="t" style="left:37px;top:419.5px;font-size:5px;line-height:5px;color:#989898;letter-spacing:-0.169px;font-style:italic;">suivants :</div>
<div class="t" style="left:37px;top:498.0px;font-size:5px;line-height:5px;color:#989898;letter-spacing:-0.159px;font-style:italic;">Insérer un tableau</div>
<div class="r" style="left:156px;top:149px;width:15px;height:425px;background:#e8e8e8;"></div>
<div class="r" style="left:156px;top:149px;width:15px;height:15px;border:1px solid #c6c6c6;box-sizing:border-box;background:#fff;"></div>
<svg class="s" style="left:159px;top:154px;" width="9" height="5" viewBox="0 0 9 5"><path d="M0.5 4.5L4.5 0.5L8.5 4.5Z" fill="#666"/></svg>
<div class="r" style="left:156px;top:163px;width:15px;height:99px;border:1px solid #c6c6c6;box-sizing:border-box;background:#fff;"></div>
<div class="r" style="left:156px;top:559px;width:15px;height:15px;border:1px solid #c6c6c6;box-sizing:border-box;background:#fff;"></div>
<svg class="s" style="left:159px;top:564px;" width="9" height="5" viewBox="0 0 9 5"><path d="M0.5 0.5L4.5 4.5L8.5 0.5Z" fill="#666"/></svg>
<div class="r" style="left:175px;top:147px;width:1px;height:427px;background:#d5d5d5;"></div>
<div class="r" style="left:176px;top:147px;width:970px;height:429px;background:linear-gradient(#fdfdfd,#f0f0f0);"></div>
<div class="r" style="left:1130px;top:149px;width:15px;height:425px;background:#e8e8e8;"></div>
<div class="r" style="left:1130px;top:149px;width:15px;height:15px;border:1px solid #c6c6c6;box-sizing:border-box;background:#fff;"></div>
<svg class="s" style="left:1133px;top:154px;" width="9" height="5" viewBox="0 0 9 5"><path d="M0.5 4.5L4.5 0.5L8.5 4.5Z" fill="#666"/></svg>
<div class="r" style="left:1130px;top:163px;width:15px;height:18px;border:1px solid #c6c6c6;box-sizing:border-box;background:#fff;"></div>
<div class="r" style="left:1130px;top:502px;width:15px;height:15px;border:1px solid #c6c6c6;box-sizing:border-box;background:#fff;"></div>
<svg class="s" style="left:1133px;top:507px;" width="9" height="5" viewBox="0 0 9 5"><path d="M0.5 0.5L4.5 4.5L8.5 0.5Z" fill="#666"/></svg>
<div class="r" style="left:1130px;top:517px;width:16px;height:56px;background:#efefef;"></div>
<svg class="s" style="left:0;top:0" width="1147" height="599" viewBox="0 0 1147 599"><path d="M1133.5 526L1137.5 522L1141.5 526Z" fill="#6a6a6a"/><path d="M1133.5 530L1137.5 526.5L1141.5 530Z" fill="#6a6a6a"/>
<path d="M1133.5 540L1137.5 544L1141.5 540Z" fill="#6a6a6a"/><path d="M1133.5 544.5L1137.5 548L1141.5 544.5Z" fill="#6a6a6a"/></svg>
<div class="r" style="left:178px;top:573px;width:968px;height:1px;background:#d5d5d5;"></div>
<div class="r" style="left:299px;top:159px;width:709px;height:400px;border:1px solid #c6c6c6;box-sizing:border-box;background:#fff;box-shadow:0 0 0 0 #000;"></div>
<div class="t" style="left:354.5px;top:204px;font-size:30px;line-height:30px;color:#c25a1c;font-family:'Liberation Serif', serif;letter-spacing:0.000px;font-weight:normal;-webkit-text-stroke:0.4px #c25a1c;transform:scaleX(1.0762);transform-origin:0px 0;">Créer des tableaux</div>
<svg class="s" style="left:0;top:0" width="1147" height="599" viewBox="0 0 1147 599"><rect x="348.5" y="265.5" width="611" height="254" fill="none" stroke="#505050" stroke-dasharray="2 1"/></svg>
<div class="t" style="left:368px;top:269px;font-size:19px;line-height:19px;color:#111;font-family:'Liberation Sans', sans-serif;letter-spacing:-0.036px;font-weight:normal;">Cliquez pour ajouter du texte</div>
<div class="r" style="left:355px;top:275px;width:5.5px;height:5.5px;border-radius:50%;background:#111;"></div>
<div class="r" style="left:1px;top:576px;width:1145px;height:22px;background:#d24726;"></div>
<div class="t" style="left:10px;top:581px;font-size:11px;line-height:11px;color:#fff;font-family:'Liberation Sans', sans-serif;letter-spacing:0.000px;font-weight:normal;-webkit-text-stroke:0.2px #fff;transform:scaleX(0.9098);transform-origin:0px 0;">DIAPOSITIVE 1 DE 21</div>
<svg class="s" style="left:0;top:0" width="1147" height="599" viewBox="0 0 1147 599"><path d="M138.5 581L137.5 580.5H132.5V590.5H137.5L138.5 591.5L139.5 590.5H144.5V588" fill="none" stroke="#fff" stroke-width="1"/>
<path d="M144.5 583.5V580.5H139.5L138.5 581V592" fill="none" stroke="#fff" stroke-width="1"/>
<path d="M140.6 585.6L142.1 587.2L145.8 583.4" fill="none" stroke="#fff" stroke-width="1.5"/></svg>
<div class="t" style="left:163px;top:581px;font-size:11px;line-height:11px;color:#fff;font-family:'Liberation Sans', sans-serif;letter-spacing:0.000px;font-weight:normal;-webkit-text-stroke:0.2px #fff;transform:scaleX(0.9072);transform-origin:0px 0;">FRANÇAIS (FRANCE)</div>
<svg class="s" style="left:0;top:0" width="1147" height="599" viewBox="0 0 1147 599"><path d="M546.3 583.4L548.4 581L550.5 583.4Z" fill="#fff"/>
<path d="M543 585.5H553.8M543 588.5H553.8M543 591.5H549.5" stroke="#fff" stroke-width="1.1"/></svg>
<div class="t" style="left:559.5px;top:582px;font-size:11px;line-height:11px;color:#fff;font-family:'Liberation Sans', sans-serif;letter-spacing:0.000px;font-weight:normal;-webkit-text-stroke:0.2px #fff;transform:scaleX(0.9348);transform-origin:0px 0;">COMMENTAIRES</div>
<svg class="s" style="left:0;top:0" width="1147" height="599" viewBox="0 0 1147 599"><path d="M665 581.2H675A1 1 0 0 1 676 582.2V588.6A1 1 0 0 1 675 589.6H670.5L668 592.6V589.6H665A1 1 0 0 1 664 588.6V582.2A1 1 0 0 1 665 581.2Z" fill="#fbeeea"/></svg>
<div class="t" style="left:680.3px;top:582px;font-size:11px;line-height:11px;color:#fff;font-family:'Liberation Sans', sans-serif;letter-spacing:0.000px;font-weight:normal;-webkit-text-stroke:0.2px #fff;transform:scaleX(0.9360);transform-origin:0px 0;">COMMENTAIRES</div>
<div class="r" style="left:783px;top:576px;width:38px;height:22px;background:#b83b1f;"></div>
<svg class="s" style="left:0;top:0" width="1147" height="599" viewBox="0 0 1147 599"><rect x="795.5" y="580.5" width="13" height="12" fill="none" stroke="#fff"/>
<rect x="795" y="580" width="3" height="13" fill="#fff"/>
<rect x="800.5" y="582.5" width="6" height="4" fill="none" stroke="#fff"/>
<rect x="797" y="588" width="12" height="1.5" fill="#fff"/></svg>
<svg class="s" style="left:833px;top:580px;" width="14" height="13" viewBox="0 0 14 13"><rect x="0" y="0" width="6" height="5.5" fill="#fff"/><rect x="8" y="0" width="6" height="5.5" fill="#fff"/><rect x="0" y="7.5" width="6" height="5.5" fill="#fff"/><rect x="8" y="7.5" width="6" height="5.5" fill="#fff"/></svg>
<svg class="s" style="left:0;top:0" width="1147" height="599" viewBox="0 0 1147 599"><path d="M871.5 581.5Q874.5 580.5 877.5 581.5Q880.5 580.5 883.5 581.5V592.5Q880.5 591.5 877.5 592.5Q874.5 591.5 871.5 592.5Z" fill="none" stroke="#fff"/>
<path d="M877.5 581V593.5M873 583.5H876M873 585.5H876M873 587.5H876M873 589.5H876M879 583.5H882M879 585.5H882M879 587.5H882M879 589.5H882" stroke="#fff"/>
<path d="M876 592.5L877.5 594.5L879 592.5Z" fill="#fff"/></svg>
<svg class="s" style="left:909px;top:580px;" width="14" height="14" viewBox="0 0 14 14"><rect x="0" y="0" width="14" height="2" fill="#fff"/><path d="M1.5 2V8.5H12.5V2" fill="none" stroke="#fff"/><path d="M4 4.5H10" stroke="#fff"/><path d="M7 8.5V13M4 13H10" stroke="#fff"/></svg>
<div class="r" style="left:940px;top:586px;width:6px;height:2px;background:#fff;"></div>
<div class="r" style="left:950px;top:587px;width:100px;height:1px;background:#fff;"></div>
<div class="r" style="left:975px;top:581px;width:4px;height:12px;background:#fff;"></div>
<div class="r" style="left:1000px;top:583px;width:1px;height:7px;background:#fff;"></div>
<svg class="s" style="left:1054px;top:583px;" width="8" height="8" viewBox="0 0 8 8"><path d="M4 0V8M0 4H8" stroke="#fff" stroke-width="2"/></svg>
<div class="t" style="left:1078.2px;top:581px;font-size:11px;line-height:11px;color:#fff;font-family:'Liberation Sans', sans-serif;letter-spacing:-0.500px;font-weight:normal;-webkit-text-stroke:0.25px #fff;">56 %</div>
<svg class="s" style="left:0;top:0" width="1147" height="599" viewBox="0 0 1147 599"><rect x="1115.6" y="581.6" width="12" height="12" fill="none" stroke="#fff" stroke-width="1.3"/>
<path d="M1121.6 583.3V586.2M1121.6 589V591.9M1117.3 587.6H1120.2M1123 587.6H1125.9" stroke="#fff" stroke-width="1"/>
<path d="M1120.1 584.6L1121.6 583.1L1123.1 584.6M1120.1 590.6L1121.6 592.1L1123.1 590.6M1118.6 586.1L1117.1 587.6L1118.6 589.1M1124.6 586.1L1126.1 587.6L1124.6 589.1" fill="none" stroke="#fff" stroke-width="1"/></svg>
<div class="r" style="left:0;top:0;width:1147px;height:599px;box-sizing:border-box;border:1px solid #7a7a7a;pointer-events:none;"></div>
</body></html>
